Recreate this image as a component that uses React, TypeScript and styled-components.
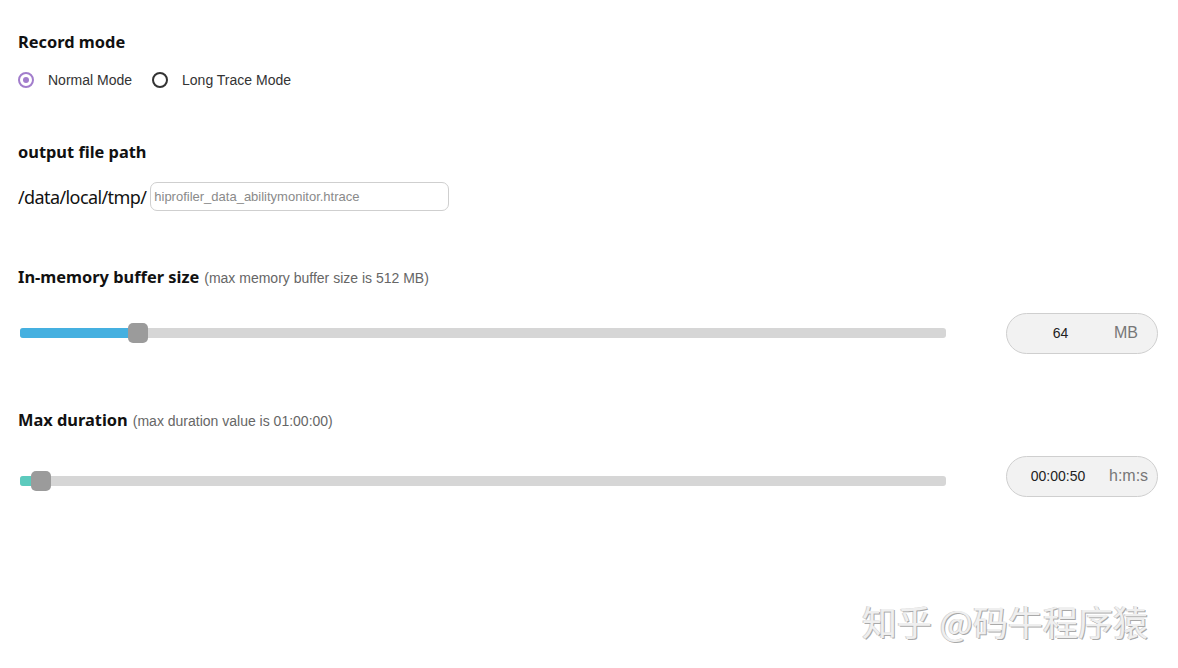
import React from 'react'
import styled, { createGlobalStyle } from 'styled-components'

const GlobalStyle = createGlobalStyle`
  html, body {
    margin: 0;
    padding: 0;
    background: #ffffff;
  }
  body {
    font-family: 'Liberation Sans', Arial, sans-serif;
    color: #222;
  }
`

const Page = styled.div`
  position: relative;
  width: 1178px;
  height: 668px;
  box-sizing: border-box;
  padding: 31px 20px 0 18px;
  overflow: hidden;
`

const Section = styled.section<{ $gap: number; $top: number }>`
  display: flex;
  flex-direction: column;
  gap: ${(p) => p.$gap}px;
  margin-top: ${(p) => p.$top}px;
`

const TitleRow = styled.div`
  display: flex;
  align-items: baseline;
  gap: 5px;
  height: 22px;
  line-height: 22px;
`

const Title = styled.span`
  font-family: 'Noto Sans', 'Open Sans', sans-serif;
  font-weight: 700;
  font-size: 16.4px;
  color: #111;
`

const Hint = styled.span`
  font-family: 'Liberation Sans', Arial, sans-serif;
  font-size: 14px;
  color: #666;
`

const RadioGroup = styled.div`
  display: flex;
  align-items: center;
  height: 20px;
  gap: 20px;
`

const RadioLabel = styled.label`
  display: flex;
  align-items: center;
  gap: 14px;
  font-size: 14px;
  color: #333;
  cursor: pointer;
`

const RadioDot = styled.span<{ $checked?: boolean }>`
  box-sizing: border-box;
  width: 16px;
  height: 16px;
  border-radius: 50%;
  border: 2px solid ${(p) => (p.$checked ? '#a27dcc' : '#333')};
  display: flex;
  align-items: center;
  justify-content: center;
  &::after {
    content: '';
    width: 6px;
    height: 6px;
    border-radius: 50%;
    background: ${(p) => (p.$checked ? '#a27dcc' : 'transparent')};
  }
`

const PathRow = styled.div`
  display: flex;
  align-items: center;
  height: 29px;
  gap: 4px;
`

const PathPrefix = styled.span`
  font-family: 'Noto Sans', 'Open Sans', sans-serif;
  font-size: 18px;
  letter-spacing: -0.6px;
  color: #111;
`

const PathInput = styled.input`
  box-sizing: border-box;
  width: 299px;
  height: 29px;
  border: 1px solid #cfcfcf;
  border-radius: 7px;
  padding: 0 3px;
  font-family: 'Liberation Sans', Arial, sans-serif;
  font-size: 13px;
  outline: none;
  &::placeholder {
    color: #8a8a8a;
  }
`

const SliderRow = styled.div`
  display: flex;
  align-items: center;
  justify-content: space-between;
  height: 40px;
`

const Track = styled.div<{ $shift?: number }>`
  position: relative;
  width: 926px;
  height: 10px;
  margin-left: 2px;
  margin-top: ${(p) => (p.$shift || 0) * 2}px;
  border-radius: 3px;
  background: #d6d6d6;
`

const Fill = styled.div<{ $color: string }>`
  position: absolute;
  left: 0;
  top: 0;
  bottom: 0;
  border-radius: 3px;
  background: ${(p) => p.$color};
`

const Thumb = styled.div`
  position: absolute;
  top: -5px;
  width: 20px;
  height: 20px;
  border-radius: 5px;
  background: #9b9b9b;
`

const ValueBox = styled.div`
  box-sizing: border-box;
  width: 152px;
  height: 41px;
  border: 1px solid #cfcfcf;
  border-radius: 21px;
  background: #f2f2f2;
  display: flex;
  align-items: center;
`

const Value = styled.span<{ $width: number }>`
  width: ${(p) => p.$width}px;
  text-align: center;
  font-size: 14px;
  color: #222;
`

const Unit = styled.span`
  font-size: 16px;
  color: #777;
`

const Watermark = styled.div`
  position: absolute;
  left: 862px;
  top: 596px;
  font-family: 'Noto Sans CJK SC', sans-serif;
  font-size: 35px;
  line-height: 50px;
  color: #efefef;
  text-shadow: 1px 1px 0 #a9a9a9, -1px 0 0 #d0d0d0;
  white-space: nowrap;
`

type SliderProps = {
  thumb: number
  color: string
  shift?: number
  value: string
  valueWidth: number
  unit: string
}

const Slider = ({ thumb, color, shift, value, valueWidth, unit }: SliderProps) => (
  <SliderRow>
    <Track $shift={shift}>
      <Fill $color={color} style={{ width: thumb + 10 }} />
      <Thumb style={{ left: thumb }} />
    </Track>
    <ValueBox>
      <Value $width={valueWidth}>{value}</Value>
      <Unit>{unit}</Unit>
    </ValueBox>
  </SliderRow>
)

const App = () => {
  return (
    <Page>
      <GlobalStyle />
      <Section $gap={17} $top={0}>
        <TitleRow>
          <Title>Record mode</Title>
        </TitleRow>
        <RadioGroup>
          <RadioLabel>
            <RadioDot $checked />
            Normal Mode
          </RadioLabel>
          <RadioLabel>
            <RadioDot />
            Long Trace Mode
          </RadioLabel>
        </RadioGroup>
      </Section>

      <Section $gap={19} $top={51}>
        <TitleRow>
          <Title>output file path</Title>
        </TitleRow>
        <PathRow>
          <PathPrefix>/data/local/tmp/</PathPrefix>
          <PathInput placeholder="hiprofiler_data_abilitymonitor.htrace" />
        </PathRow>
      </Section>

      <Section $gap={25} $top={55}>
        <TitleRow>
          <Title>In-memory buffer size</Title>
          <Hint>(max memory buffer size is 512 MB)</Hint>
        </TitleRow>
        <Slider thumb={108} color="#45b0e0" value="64" valueWidth={107} unit="MB" />
      </Section>

      <Section $gap={25} $top={56}>
        <TitleRow>
          <Title>Max duration</Title>
          <Hint>(max duration value is 01:00:00)</Hint>
        </TitleRow>
        <Slider thumb={11} color="#5ccabd" shift={5} value="00:00:50" valueWidth={102} unit="h:m:s" />
      </Section>

      <Watermark>知乎 @码牛程序猿</Watermark>
    </Page>
  )
}

export default App
